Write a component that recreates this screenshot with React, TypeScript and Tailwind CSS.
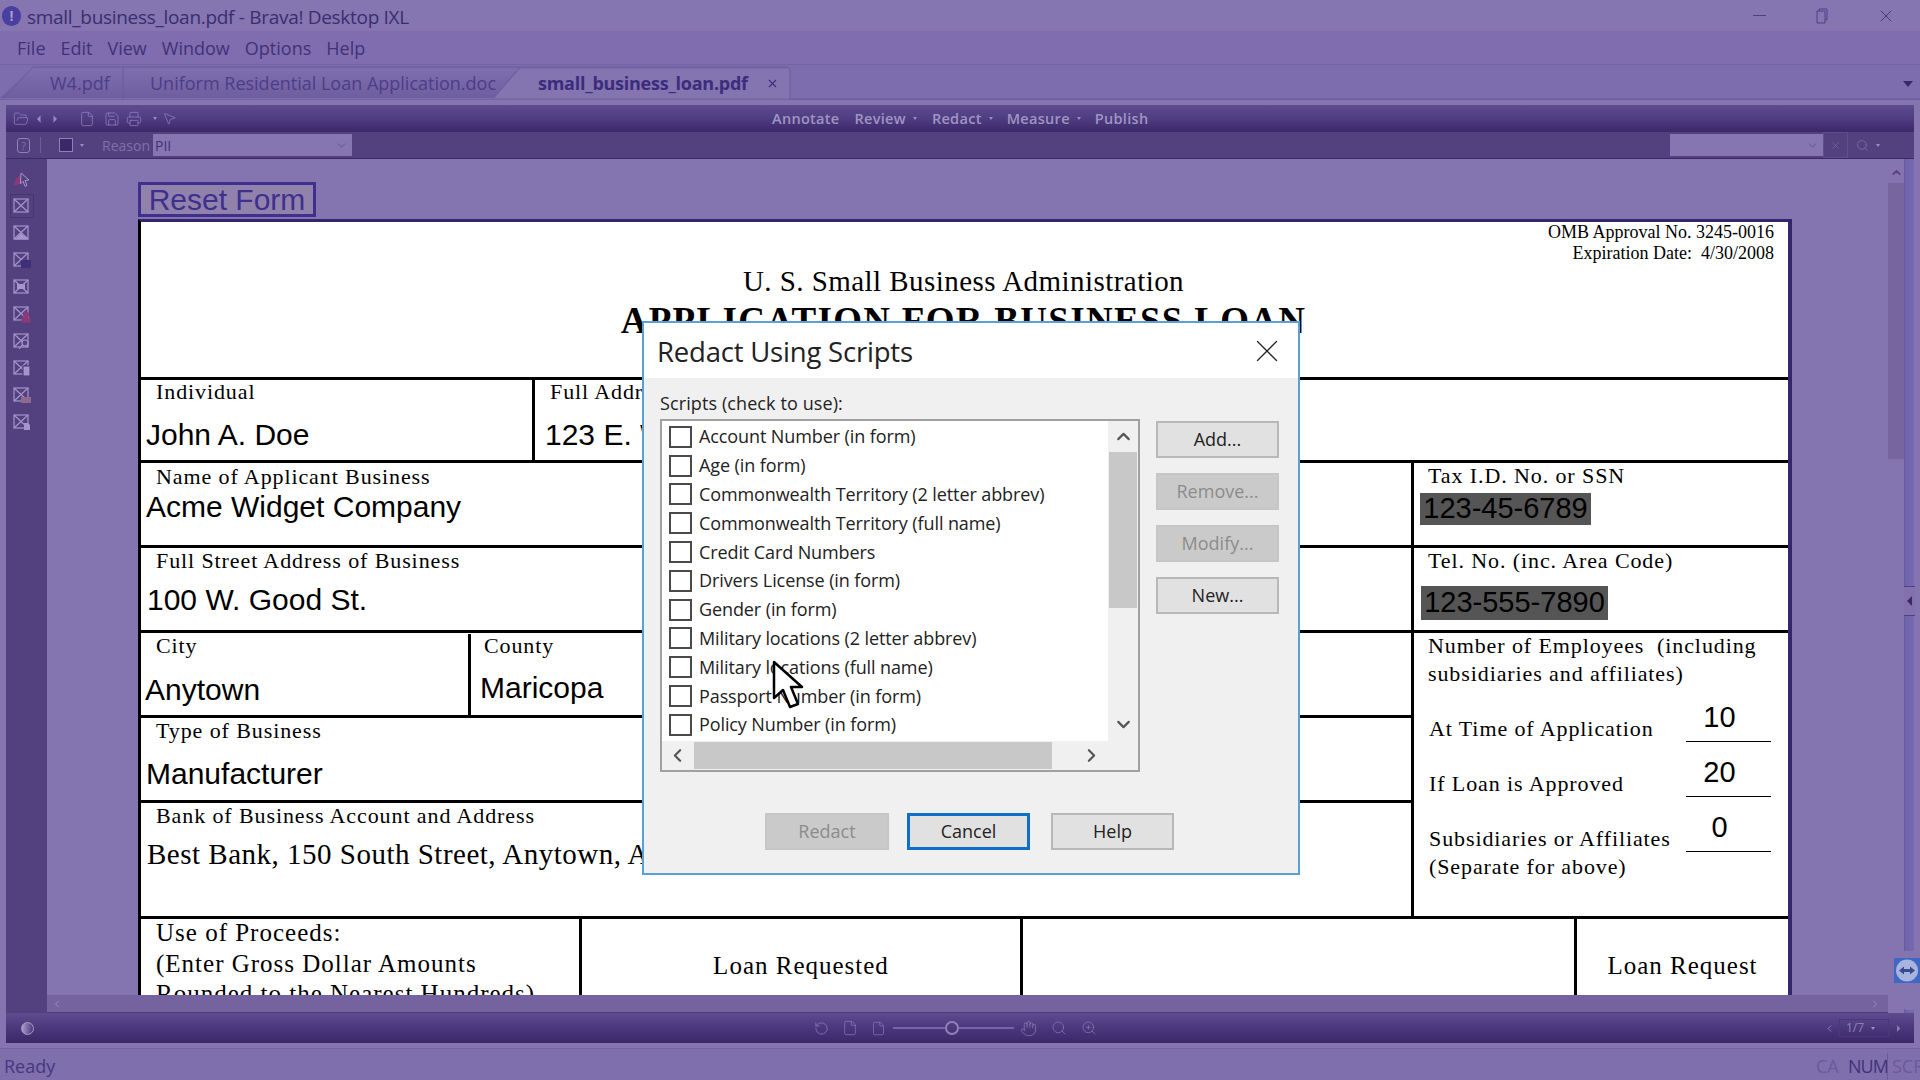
import { ChevronDown, ChevronLeft, ChevronRight, ChevronUp, File, FolderOpen, Hand, MousePointer2, Printer, RotateCcw, Save, Search, X, ZoomIn } from 'lucide-react';

const scripts = [
  'Account Number (in form)',
  'Age (in form)',
  'Commonwealth Territory (2 letter abbrev)',
  'Commonwealth Territory (full name)',
  'Credit Card Numbers',
  'Drivers License (in form)',
  'Gender (in form)',
  'Military locations (2 letter abbrev)',
  'Military locations (full name)',
  'Passport Number (in form)',
  'Policy Number (in form)',
];

const menu = ['File', 'Edit', 'View', 'Window', 'Options', 'Help'];

function RailIcon({ extra }: { extra?: 'chev' | 'ab' | 'box' | 'user' | 'find' | 'doc' | 'folder' | 'page' }) {
  return (
    <svg width="18" height="18" viewBox="0 0 18 18" fill="none" stroke="#a496cc" strokeWidth="1.2">
      <rect x="1" y="2" width="14" height="13" />
      <path d="M1 2l14 13M15 2L1 15" />
      {extra === 'chev' && <path d="M3 15l5-5 6 5z" fill="#a496cc" />}
      {extra === 'ab' && <rect x="8" y="9" width="10" height="8" fill="#3f2f78" stroke="none" />}
      {extra === 'box' && <rect x="4" y="6" width="8" height="5" fill="#a496cc" stroke="none" />}
      {extra === 'user' && <path d="M9 17v-4h8v4zM13 12a2.5 2.5 0 100-5 2.5 2.5 0 000 5z" fill="#8a3a78" stroke="#8a3a78" />}
      {extra === 'find' && <path d="M12 14a3 3 0 100-6 3 3 0 000 6zM9.500 12.500L6 17" fill="#52407f" />}
      {extra === 'doc' && <rect x="10" y="7" width="7" height="10" fill="#a496cc" stroke="#52407f" />}
      {extra === 'folder' && <rect x="8" y="11" width="10" height="6" fill="#8f6a90" stroke="none" />}
      {extra === 'page' && <path d="M11 10h4l2 2v5h-6z" fill="#a496cc" stroke="none" />}
    </svg>
  );
}

function Caret() {
  return <span className="mx-[7px] inline-block border-x-[2.5px] border-t-[3px] border-x-transparent border-t-[#9a8cc4] align-middle" />;
}

function SideButton({ label, disabled }: { label: string; disabled?: boolean }) {
  return (
    <div className={`flex h-[37px] w-[123px] items-center justify-center border-2 text-[18px] ${disabled ? 'border-[#c6c6c6] bg-[#cacaca] text-[#8c8c8c]' : 'border-[#b8b8b8] bg-[#e1e1e1] text-[#222]'}`}>
      {label}
    </div>
  );
}

export default function App() {
  return (
    <div className="relative flex h-[1080px] w-[1920px] flex-col overflow-hidden bg-[#8474b0] font-['Open_Sans',sans-serif]">
      {/* title bar */}
      <div className="flex h-[31px] items-center bg-[#8575b1] text-[#3a2d70]">
        <div className="ml-[2px] h-[20px] w-[19px] rounded-full bg-[#4a3f9f] text-center text-[14px] font-bold leading-[20px] text-[#a79cd0]">!</div>
        <span className="ml-[6px] mt-[3px] text-[19px] tracking-[-0.3px]">small_business_loan.pdf - Brava! Desktop IXL</span>
        <div className="ml-auto flex items-center pr-[24px]">
          <div className="h-px w-[13px] bg-[#4f4088]" />
          <svg className="ml-[50px]" width="12" height="16" viewBox="0 0 12 16" fill="none" stroke="#4f4088">
            <path d="M3 3V1h8v11H9M1 3h8v12H1z" />
          </svg>
          <X size={20} strokeWidth={1} className="ml-[48px] text-[#3a2d70]" />
        </div>
      </div>

      {/* menu */}
      <div className="flex h-[34px] items-center gap-[15px] border-b border-[#7364a2] bg-[#7f6db0] pl-[17px] pt-[2px] text-[18px] text-[#3f3278]">
        {menu.map((m) => (
          <span key={m}>{m}</span>
        ))}
      </div>

      {/* tabs */}
      <div className="relative flex h-[35px] items-stretch border-b border-[#7364a2] bg-[#7e6dae] pb-px pt-[4px] text-[18px] text-[#4c3d88]">
        <div className="flex w-[123px] items-center bg-gradient-to-b from-[#7f6eae] to-[#6f5e9f] pl-[50px] [clip-path:polygon(30px_0,100%_0,100%_100%,0_100%)]">W4.pdf</div>
        <div className="flex w-[397px] items-center bg-gradient-to-b from-[#7f6eae] to-[#6f5e9f] pl-[27px] [clip-path:polygon(0_0,100%_0,372px_100%,0_100%)]">
          <span className="whitespace-nowrap">Uniform Residential Loan Application.doc</span>
        </div>
        <div className="-ml-[27px] flex w-[297px] items-center bg-[#8474b0] pl-[45px] font-bold text-[#3c2c7c] [clip-path:polygon(27px_0,100%_0,100%_100%,0_100%)]">
          <span className="tracking-[-0.25px]">small_business_loan.pdf</span>
          <X size={13} strokeWidth={2} className="ml-[18px] text-[#3c2c7c]" />
        </div>
        <svg className="absolute left-0 top-0" width="1920" height="35" fill="none" stroke="#6a5a9a">
          <path d="M3 34L33 2H123V34M123 2H520L493 34M520 2H785Q790 2 790 6V34H1920" />
        </svg>
        <div className="ml-auto mr-[7px] self-center border-x-[5px] border-t-[6px] border-x-transparent border-t-[#37286e]" />
      </div>

      {/* viewer */}
      <div className="mx-[6px] mt-[5px] flex h-[938px] flex-col">
        <div className="relative flex h-[27px] items-center bg-gradient-to-b from-[#5d4c8e] via-[#4f3d82] to-[#3a2868] pl-[7px] text-[#9a8cc4]">
          <div className="flex items-center gap-[4px]">
            <FolderOpen size={16} strokeWidth={1} />
            <ChevronLeft size={12} fill="currentColor" />
            <ChevronRight size={12} fill="currentColor" />
            <File size={16} strokeWidth={1} className="ml-[14px]" />
            <Save size={16} strokeWidth={1} className="ml-[5px]" />
            <Printer size={16} strokeWidth={1} className="ml-[2px]" />
            <Caret />
            <MousePointer2 size={15} strokeWidth={1} className="-ml-[6px]" />
          </div>
          <div className="ml-[595px] flex items-center text-[14.5px] font-semibold tracking-[0.3px] text-[#a094c2]">
            <span>Annotate</span>
            <span className="ml-[15px]">Review</span>
            <Caret />
            <span className="ml-[8px]">Redact</span>
            <Caret />
            <span className="ml-[7px]">Measure</span>
            <Caret />
            <span className="ml-[7px]">Publish</span>
          </div>
        </div>
        <div className="flex h-[27px] items-center border-b border-[#3a2868] bg-[#53417f] pl-[11px] text-[#7f70aa]">
          <div className="h-[15px] w-[13px] rounded-[3px] border border-[#8f80bb] text-center text-[11px] leading-[13px]">?</div>
          <div className="ml-[10px] h-[16px] w-px bg-[#6c5c98]" />
          <div className="ml-[18px] h-[14px] w-[14px] border border-[#8f80bb] bg-[#3a2868]" />
          <Caret />
          <span className="ml-[11px] text-[14px]">Reason</span>
          <div className="ml-[3px] flex h-[22px] w-[199px] items-center bg-[#8575b1] pl-[2px] text-[14px] text-[#3f3278]">
            PII
            <ChevronDown size={13} strokeWidth={1} className="ml-auto mr-[4px]" />
          </div>
          <div className="ml-[1318px] flex h-[22px] w-[153px] items-center bg-[#8575b1]">
            <ChevronDown size={13} strokeWidth={1} className="ml-auto mr-[4px] text-[#3f3278]" />
          </div>
          <div className="flex h-[26px] w-[25px] items-center justify-center border border-[#5f4e8f]">
            <X size={11} className="text-[#6f5f9f]" />
          </div>
          <Search size={13} strokeWidth={1} className="ml-[8px] text-[#8f80bb]" />
          <Caret />
        </div>

        <div className="flex h-[854px]">
          {/* left rail */}
          <div className="flex w-[41px] flex-col items-start gap-[9px] bg-[#52407f] pl-[7px] pt-[11px]">
            <svg width="18" height="18" viewBox="0 0 18 18">
              <path d="M1 15C2 9 6 4 11 2L9 12C7 14 4 16 1 15z" fill="#8a3a78" />
              <path d="M8 3l8 7-4 .5 2 5-2 .8-2-5-2.500 2.500z" fill="#52407f" stroke="#a496cc" strokeWidth="1" />
            </svg>
            <div className="-mx-[3px] -my-[3px] border border-[#46356f] p-[2px]"><RailIcon /></div>
            <RailIcon extra="chev" />
            <RailIcon extra="ab" />
            <RailIcon extra="box" />
            <RailIcon extra="user" />
            <RailIcon extra="find" />
            <RailIcon extra="doc" />
            <RailIcon extra="folder" />
            <RailIcon extra="page" />
          </div>

          <div className="flex w-[1841px] flex-col">
            <div className="h-[836px] overflow-hidden pl-[91px] pt-[23px]">
              <div className="flex h-[35px] w-[178px] items-center justify-center border-[3px] border-[#3f2f8f] bg-[#9182ab] font-['Liberation_Sans',sans-serif] text-[30px] text-[#3f2f8f]">Reset Form</div>
              <div className="mt-[2px] w-[1654px] border-l-[3px] border-r-[4px] border-t-[3px] border-l-black border-r-[#35256a] border-t-[#35256a] bg-white font-['Liberation_Serif',serif] text-[22px] tracking-[0.9px] text-black">
                <div className="h-[158px] border-b-[3px] border-black text-center">
                  <div className="pr-[14px] text-right text-[18px] leading-[21px] tracking-normal">
                    OMB Approval No. 3245-0016
                    <br />
                    Expiration Date:&nbsp; 4/30/2008
                  </div>
                  <div className="-ml-[2px] mt-[1px] text-[29px] leading-[32px] tracking-[0.45px]">U. S. Small Business Administration</div>
                  <div className="-ml-[2px] mt-[5px] text-[37px] font-bold leading-[38px] tracking-[1.3px]">APPLICATION FOR BUSINESS LOAN</div>
                </div>
                <div className="flex h-[83px] border-b-[3px] border-black">
                  <div className="w-[394px] border-r-[3px] border-black">
                    <div className="pl-[15px] leading-[24px]">Individual</div>
                    <div className="mt-[15px] pl-[5px] font-['Liberation_Sans',sans-serif] text-[30px] leading-[32px] tracking-normal">John A. Doe</div>
                  </div>
                  <div>
                    <div className="pl-[15px] leading-[24px]">Full Address</div>
                    <div className="mt-[15px] pl-[10px] font-['Liberation_Sans',sans-serif] text-[30px] leading-[32px] tracking-normal">123 E. West St.</div>
                  </div>
                </div>
                <div className="flex">
                  <div className="w-[1273px] border-r-[3px] border-black">
                    <div className="h-[85px] border-b-[3px] border-black pt-[2px]">
                      <div className="pl-[15px] leading-[24px]">Name of Applicant Business</div>
                      <div className="mt-[2px] pl-[5px] font-['Liberation_Sans',sans-serif] text-[30px] leading-[32px] tracking-normal">Acme Widget Company</div>
                    </div>
                    <div className="h-[85px] border-b-[3px] border-black pt-px">
                      <div className="pl-[15px] leading-[24px]">Full Street Address of Business</div>
                      <div className="mt-[11px] pl-[6px] font-['Liberation_Sans',sans-serif] text-[30px] leading-[32px] tracking-normal">100 W. Good St.</div>
                    </div>
                    <div className="flex h-[85px] border-b-[3px] border-black pt-px">
                      <div className="w-[330px] border-r-[3px] border-black">
                        <div className="pl-[15px] leading-[24px]">City</div>
                        <div className="mt-[16px] pl-[4px] font-['Liberation_Sans',sans-serif] text-[30px] leading-[32px] tracking-normal">Anytown</div>
                      </div>
                      <div>
                        <div className="pl-[13px] leading-[24px]">County</div>
                        <div className="mt-[14px] pl-[9px] font-['Liberation_Sans',sans-serif] text-[30px] leading-[32px] tracking-normal">Maricopa</div>
                      </div>
                    </div>
                    <div className="h-[85px] border-b-[3px] border-black pt-px">
                      <div className="pl-[15px] leading-[24px]">Type of Business</div>
                      <div className="mt-[15px] pl-[5px] font-['Liberation_Sans',sans-serif] text-[30px] leading-[32px] tracking-normal">Manufacturer</div>
                    </div>
                    <div className="h-[113px] pt-[1px]">
                      <div className="pl-[15px] leading-[24px]">Bank of Business Account and Address</div>
                      <div className="mt-[10px] pl-[6px] text-[29px] leading-[32px] tracking-[0.5px]">Best Bank, 150 South Street, Anytown, AZ</div>
                    </div>
                  </div>
                  <div className="flex-1">
                    <div className="h-[85px] border-b-[3px] border-black pt-px">
                      <div className="pl-[14px] leading-[24px]">Tax I.D. No. or SSN</div>
                      <div className="ml-[6px] mt-[5px] flex h-[32px] w-[171px] items-center justify-center bg-[#555] font-['Liberation_Sans',sans-serif] text-[29px] tracking-normal text-black">123-45-6789</div>
                    </div>
                    <div className="h-[85px] border-b-[3px] border-black pt-px">
                      <div className="pl-[14px] leading-[24px]">Tel. No. (inc. Area Code)</div>
                      <div className="ml-[7px] mt-[13px] flex h-[34px] w-[187px] items-center justify-center bg-[#555] font-['Liberation_Sans',sans-serif] text-[29px] tracking-normal text-black">123-555-7890</div>
                    </div>
                    <div className="-mt-px pl-[14px]">
                      <div className="leading-[28px]">
                        Number of Employees&nbsp; (including
                        <br />
                        subsidiaries and affiliates)
                      </div>
                      <div className="mt-[12px] flex">
                        <div className="mt-[17px] w-[258px] pl-[1px] leading-[24px]">At Time of Application</div>
                        <div className="h-[42px] w-[85px] border-b border-black pr-[18px] text-center font-['Liberation_Sans',sans-serif] text-[29px] leading-[34px] tracking-normal">10</div>
                      </div>
                      <div className="mt-[13px] flex">
                        <div className="mt-[17px] w-[258px] pl-[1px] leading-[24px]">If Loan is Approved</div>
                        <div className="h-[42px] w-[85px] border-b border-black pr-[18px] text-center font-['Liberation_Sans',sans-serif] text-[29px] leading-[34px] tracking-normal">20</div>
                      </div>
                      <div className="mt-[13px] flex">
                        <div className="mt-[15px] w-[258px] pl-[1px] leading-[28px]">
                          Subsidiaries or Affiliates
                          <br />
                          (Separate for above)
                        </div>
                        <div className="h-[42px] w-[85px] border-b border-black pr-[18px] text-center font-['Liberation_Sans',sans-serif] text-[29px] leading-[34px] tracking-normal">0</div>
                      </div>
                    </div>
                  </div>
                </div>
                <div className="flex h-[90px] border-t-[3px] border-black text-[25px] tracking-[1px]">
                  <div className="w-[441px] border-r-[3px] border-black pl-[15px]">
                    <div className="-mt-[1px] whitespace-nowrap leading-[30.5px]">
                      Use of Proceeds:
                      <br />
                      (Enter Gross Dollar Amounts
                      <br />
                      Rounded to the Nearest Hundreds)
                    </div>
                  </div>
                  <div className="w-[441px] border-r-[3px] border-black pt-[31px] text-center leading-[32px]">Loan Requested</div>
                  <div className="w-[554px] border-r-[3px] border-black" />
                  <div className="flex-1 pt-[31px] text-center leading-[32px]">Loan Request</div>
                </div>
              </div>
            </div>
            {/* horizontal scrollbar */}
            <div className="flex h-[18px] items-center border-b border-[#4a3a80] bg-[#75639f] text-[#9a8cc4]">
              <ChevronLeft size={12} strokeWidth={2} className="ml-[4px]" />
              <ChevronRight size={12} strokeWidth={2} className="ml-auto mr-[7px]" />
            </div>
          </div>

          {/* vertical scrollbar */}
          <div className="flex w-[26px]">
            <div className="flex h-[836px] w-[16px] flex-col items-center text-[#52407f]">
              <ChevronUp size={13} strokeWidth={3} className="mt-[7px]" />
              <div className="mt-[4px] h-[276px] w-full bg-[#77659f]" />
            </div>
            <div className="w-[10px] border-l border-[#6a5a9a] bg-gradient-to-r from-[#6f63ab] to-[#7569b0]" />
          </div>
        </div>

        <div className="flex h-[30px] items-center bg-gradient-to-b from-[#5d4c8e] via-[#4a387c] to-[#3a2868] pl-[15px] text-[#8f80bb]">
          <div className="h-[13px] w-[13px] rounded-full border border-[#a99cc8] bg-gradient-to-r from-[#a99cc8] to-transparent" />
          <RotateCcw size={15} strokeWidth={1.2} className="ml-[780px]" />
          <File size={16} strokeWidth={1} className="ml-[13px]" />
          <File size={15} strokeWidth={1} className="ml-[13px]" />
          <div className="ml-[7px] h-[2px] w-[52px] bg-[#7464a8]" />
          <div className="h-[14px] w-[14px] rounded-full border-2 border-[#8f80bb]" />
          <div className="h-[2px] w-[55px] bg-[#7464a8]" />
          <Hand size={17} strokeWidth={1} className="ml-[6px]" />
          <Search size={16} strokeWidth={1} className="ml-[14px]" />
          <ZoomIn size={16} strokeWidth={1} className="ml-[14px]" />
          <div className="ml-[727px] flex items-center text-[12px]">
            <ChevronLeft size={11} />
            <div className="ml-[4px] flex h-[18px] w-[50px] items-center border border-[#4a387c] pl-[6px]">
              1/7
              <Caret />
            </div>
            <ChevronRight size={11} fill="currentColor" className="ml-[4px]" />
          </div>
        </div>
      </div>

      {/* status bar */}
      <div className="mt-[5px] flex h-[32px] items-center border-t border-[#7364a2] bg-[#7f6fad] pl-[4px] pt-[3px] text-[18px] text-[#463880]">
        Ready
        <div className="ml-auto flex w-[104px] whitespace-nowrap text-[18px]">
          <span className="w-[32px] overflow-hidden text-[#6a5a9a]">CA</span>
          <span className="w-[40px] overflow-hidden border-r border-[#6a5a9a] tracking-[-1px] text-[#3f3278]">NUM</span>
          <span className="w-[32px] overflow-hidden pl-[4px] text-[#6a5a9a]">SCRL</span>
        </div>
      </div>

      {/* side tab of the remote session tool */}
      <div className="absolute left-[1890px] top-[951px] h-[59px] w-[30px] bg-[#8474b0] [clip-path:polygon(4px_0,100%_0,100%_100%,16px_100%,0_48px,0_4px)]">
        <svg className="ml-[4px] mt-[7px]" width="26" height="25" viewBox="0 0 26 25">
          <rect width="26" height="25" fill="#3e68c4" />
          <circle cx="13" cy="12.500" r="11" fill="#a7b4de" />
          <path d="M5 12.500l5-4v2.500h6V8.500l5 4-5 4V14h-6v2.500z" fill="#3a4a90" />
        </svg>
      </div>
      <div className="absolute left-[1904px] top-[586px] flex h-[30px] w-[11px] items-center justify-center border-y border-[#52407f] bg-[#8172ae]">
        <div className="border-y-[5px] border-r-[5px] border-y-transparent border-r-[#3a2868]" />
      </div>

      {/* dialog */}
      <div className="absolute left-[642px] top-[321px] flex h-[554px] w-[658px] flex-col border-2 border-[#5aa0d8] bg-[#f0f0f0] text-[#222]">
        <div className="flex h-[55px] items-center bg-white pl-[13px] pr-[12px]">
          <span className="mt-[3px] text-[27.5px] leading-none tracking-[-0.2px]">Redact Using Scripts</span>
          <X size={38} strokeWidth={0.8} className="ml-auto text-[#222]" />
        </div>
        <div className="px-[16px]">
          <div className="pt-[13px] text-[18px] leading-[24px] tracking-[0.1px]">Scripts (check to use):</div>
          <div className="mt-[4px] flex items-start gap-[16px]">
            <div className="flex h-[353px] w-[480px] flex-col border-2 border-[#a0a0a0] bg-white">
              <div className="flex h-[320px]">
                <div className="flex-1 pl-[7px] pt-[1.5px]">
                  {scripts.map((s) => (
                    <div key={s} className="flex h-[28.8px] items-center gap-[7px]">
                      <div className="h-[22px] w-[23px] border-2 border-[#4a4a4a] bg-white" />
                      <span className="whitespace-nowrap text-[18px] tracking-[-0.1px]">{s}</span>
                    </div>
                  ))}
                </div>
                <div className="-ml-px flex w-[30px] flex-col items-center bg-[#f0f0f0] text-[#555]">
                  <ChevronUp size={21} strokeWidth={2.5} className="mt-[5px]" />
                  <div className="mt-[5px] h-[156px] w-[28px] bg-[#c8c8c8]" />
                  <ChevronDown size={21} strokeWidth={2.5} className="mt-[106px]" />
                </div>
              </div>
              <div className="flex flex-1 items-center bg-[#f0f0f0] text-[#555]">
                <ChevronLeft size={21} strokeWidth={2.5} className="ml-[5px]" />
                <div className="ml-[6px] h-[27px] w-[358px] bg-[#c8c8c8]" />
                <ChevronRight size={21} strokeWidth={2.5} className="ml-[29px]" />
              </div>
            </div>
            <div className="flex flex-col gap-[15px] pt-[2px]">
              <SideButton label="Add..." />
              <SideButton label="Remove..." disabled />
              <SideButton label="Modify..." disabled />
              <SideButton label="New..." />
            </div>
          </div>
          <div className="ml-[105px] mt-[41px] flex">
            <div className="flex h-[37px] w-[124px] items-center justify-center border-2 border-[#c6c6c6] bg-[#cacaca] text-[18px] text-[#8c8c8c]">Redact</div>
            <div className="ml-[18px] flex h-[37px] w-[123px] items-center justify-center border-[3px] border-[#0f6fc6] bg-[#e1e1e1] text-[18px]">Cancel</div>
            <div className="ml-[21px] flex h-[37px] w-[123px] items-center justify-center border-2 border-[#b8b8b8] bg-[#e1e1e1] text-[18px]">Help</div>
          </div>
        </div>
      </div>

      {/* mouse pointer */}
      <svg className="absolute left-[772px] top-[660px]" width="32" height="50" viewBox="0 0 32 50">
        <path d="M2 2v36l9-8 7 17 8-3-7-17h11z" fill="white" stroke="black" strokeWidth="2.500" strokeLinejoin="round" />
      </svg>
    </div>
  );
}
